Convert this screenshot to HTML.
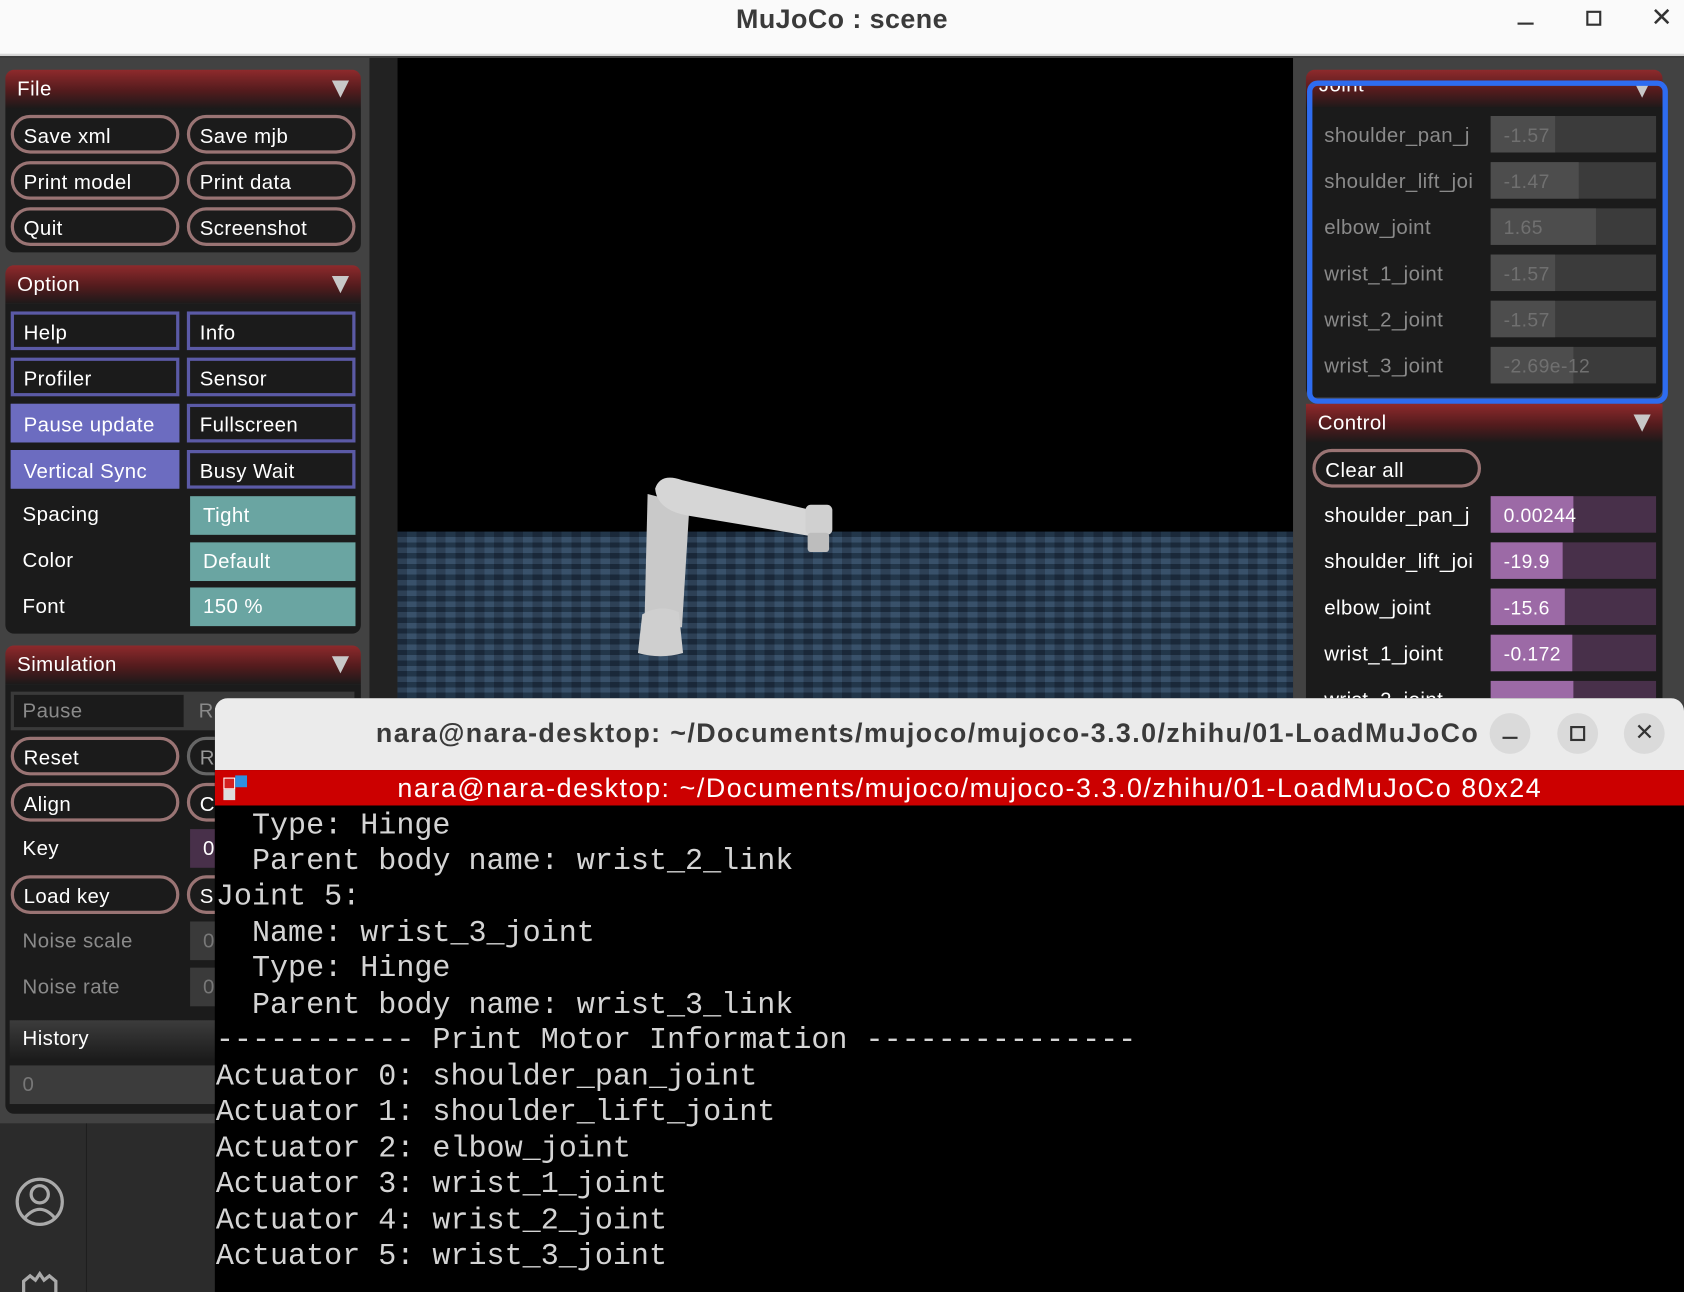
<!DOCTYPE html>
<html><head><meta charset="utf-8">
<style>
html,body{margin:0;padding:0;width:1684px;height:1292px;overflow:hidden;background:#3c3c3c}
#w{position:absolute;left:0;top:0;width:1568px;height:1203px;transform:scale(1.07398);transform-origin:0 0;font-family:"Liberation Sans",sans-serif;}
.a{position:absolute;box-sizing:border-box}
.t{position:absolute;white-space:nowrap;font-size:19px;color:#fff;line-height:1;letter-spacing:0.4px}
.hdr{position:absolute;height:36px;border-radius:8px 8px 0 0;background:linear-gradient(#8e2a2c,#521b1d 55%,#1c1a1a);}
.hdr span{position:absolute;left:11px;top:8px;font-size:19px;color:#fff;letter-spacing:0.4px}
.tri{position:absolute;right:11px;top:10px;width:0;height:0;border-left:8px solid transparent;border-right:8px solid transparent;border-top:16px solid #c8c8c8}
.body{position:absolute;background:#1b1b1b;border-radius:0 0 8px 8px}
.pill{position:absolute;height:36px;border:3px solid #9a7474;border-radius:18px;box-sizing:border-box;color:#fff;font-size:19px;padding:7px 0 0 9px;white-space:nowrap;overflow:hidden;letter-spacing:0.4px}
.rb{position:absolute;height:36px;border:3px solid #5b5aa6;box-sizing:border-box;color:#fff;font-size:19px;padding:7px 0 0 9px;white-space:nowrap;letter-spacing:0.4px}
.rf{background:#6c6cc0;border-color:#6c6cc0}
.teal{position:absolute;height:36px;background:#6aa5a2;color:#fff;font-size:19px;padding:8px 0 0 12px;box-sizing:border-box;letter-spacing:0.4px}
.sl{position:absolute;height:34px;left:1388px;width:154px;background:#3b3b3b}
.sl i{position:absolute;left:0;top:0;bottom:0;background:#4d4d4d}
.sl b{position:absolute;left:12px;top:8px;font-weight:normal;font-size:18px;color:#707070;letter-spacing:0.4px}
.cs{background:#48304a}.cs i{background:#9c6aa6}.cs b{color:#fff}
.term{font-family:"Liberation Mono","DejaVu Sans Mono",monospace;font-size:28px;color:#d4d4d4;white-space:pre;position:absolute;left:201px;line-height:1}
</style></head><body><div id="w">
<div class="a" style="left:0;top:0;width:1568px;height:52px;background:#fafafa;border-bottom:2px solid #d8d8d8"></div>
<div class="t" style="left:0;width:1568px;text-align:center;top:6px;font-size:25px;font-weight:bold;color:#3a3a3a">MuJoCo : scene</div>
<div class="a" style="left:1413px;top:21px;width:15px;height:2px;background:#333"></div>
<div class="a" style="left:1477px;top:10px;width:14px;height:14px;border:2px solid #333"></div>
<div class="t" style="left:1537px;top:5px;font-size:24px;color:#333">✕</div>

<div class="a" style="left:370px;top:54px;width:834px;height:600px;background:#000"></div>
<div class="a" style="left:370px;top:495px;width:834px;height:160px;background:repeating-linear-gradient(90deg,#22364c 0 9px,#2e4862 9px 18px);"></div>
<div class="a" style="left:370px;top:495px;width:834px;height:160px;background:repeating-linear-gradient(180deg,rgba(0,0,0,.25) 0 5px,rgba(255,255,255,.05) 5px 10px);"></div>
<svg class="a" style="left:0;top:0" width="1568" height="1203">
<polygon points="603,460 642,470 635,584 600,584" fill="#c9c9c9"/>
<path d="M610,455 Q615,440 635,447 L760,476 L760,500 L640,480 Q612,475 610,455Z" fill="#d6d6d6"/>
<rect x="750" y="470" width="25" height="28" rx="5" fill="#d0d0d0"/>
<rect x="752" y="496" width="20" height="18" rx="3" fill="#bdbdbd"/>
<path d="M598,572 Q615,562 632,570 L636,608 Q615,614 594,608Z" fill="#cfcfcf"/>
</svg>

<div class="a" style="left:0;top:54px;width:344px;height:992px;background:#424242"></div>
<div class="a" style="left:344px;top:54px;width:26px;height:992px;background:#222"></div>
<div class="hdr" style="left:5px;top:65px;width:331px"><span>File</span><div class="tri"></div></div>
<div class="body" style="left:5px;top:101px;width:331px;height:134px"></div>
<div class="pill" style="left:10px;top:107px;width:157px">Save xml</div>
<div class="pill" style="left:174px;top:107px;width:157px">Save mjb</div>
<div class="pill" style="left:10px;top:150px;width:157px">Print model</div>
<div class="pill" style="left:174px;top:150px;width:157px">Print data</div>
<div class="pill" style="left:10px;top:193px;width:157px">Quit</div>
<div class="pill" style="left:174px;top:193px;width:157px">Screenshot</div>

<div class="hdr" style="left:5px;top:247px;width:331px"><span>Option</span><div class="tri"></div></div>
<div class="body" style="left:5px;top:283px;width:331px;height:307px"></div>
<div class="rb" style="left:10px;top:290px;width:157px">Help</div>
<div class="rb" style="left:174px;top:290px;width:157px">Info</div>
<div class="rb" style="left:10px;top:333px;width:157px">Profiler</div>
<div class="rb" style="left:174px;top:333px;width:157px">Sensor</div>
<div class="rb rf" style="left:10px;top:376px;width:157px">Pause update</div>
<div class="rb" style="left:174px;top:376px;width:157px">Fullscreen</div>
<div class="rb rf" style="left:10px;top:419px;width:157px">Vertical Sync</div>
<div class="rb" style="left:174px;top:419px;width:157px">Busy Wait</div>
<div class="t" style="left:21px;top:470px">Spacing</div><div class="teal" style="left:177px;top:462px;width:154px">Tight</div>
<div class="t" style="left:21px;top:513px">Color</div><div class="teal" style="left:177px;top:505px;width:154px">Default</div>
<div class="t" style="left:21px;top:556px">Font</div><div class="teal" style="left:177px;top:547px;width:154px">150 %</div>

<div class="hdr" style="left:5px;top:601px;width:331px"><span>Simulation</span><div class="tri"></div></div>
<div class="body" style="left:5px;top:637px;width:331px;height:400px"></div>
<div class="a" style="left:10px;top:644px;width:320px;height:36px;background:#3a3a3a"></div>
<div class="a" style="left:13px;top:647px;width:158px;height:30px;background:#1b1b1b"></div>
<div class="t" style="left:21px;top:653px;color:#8a8a8a">Pause</div><div class="t" style="left:185px;top:653px;color:#8a8a8a">R</div>
<div class="pill" style="left:10px;top:686px;width:157px">Reset</div>
<div class="pill" style="left:174px;top:686px;width:157px;border-color:#666;color:#999">R</div>
<div class="pill" style="left:10px;top:729px;width:157px">Align</div>
<div class="pill" style="left:174px;top:729px;width:157px">C</div>
<div class="t" style="left:21px;top:781px">Key</div><div class="a" style="left:177px;top:772px;width:154px;height:36px;background:#48304a"></div><div class="t" style="left:189px;top:781px">0</div>
<div class="pill" style="left:10px;top:815px;width:157px">Load key</div>
<div class="pill" style="left:174px;top:815px;width:157px">S</div>
<div class="t" style="left:21px;top:867px;color:#8a8a8a">Noise scale</div><div class="a" style="left:177px;top:858px;width:154px;height:36px;background:#3a3a3a"></div><div class="t" style="left:189px;top:867px;color:#777">0</div>
<div class="t" style="left:21px;top:910px;color:#8a8a8a">Noise rate</div><div class="a" style="left:177px;top:901px;width:154px;height:36px;background:#3a3a3a"></div><div class="t" style="left:189px;top:910px;color:#777">0</div>
<div class="a" style="left:9px;top:950px;width:327px;height:36px;background:linear-gradient(#3c3c3c,#1c1c1c)"></div>
<div class="t" style="left:21px;top:958px">History</div>
<div class="a" style="left:9px;top:992px;width:327px;height:36px;background:#3c3c3c"></div>
<div class="t" style="left:21px;top:1001px;color:#777">0</div>

<div class="a" style="left:0;top:1046px;width:200px;height:157px;background:#2b2b2b"></div>
<div class="a" style="left:80px;top:1046px;width:1px;height:157px;background:#1e1e1e"></div>
<svg class="a" style="left:0;top:1046px" width="80" height="157">
<circle cx="37" cy="73" r="21" fill="none" stroke="#aaa" stroke-width="3"/>
<circle cx="37" cy="66" r="8" fill="none" stroke="#aaa" stroke-width="3"/>
<path d="M23,88 Q37,72 51,88" fill="none" stroke="#aaa" stroke-width="3"/>
<path d="M22,157 L22,147 L28,142 L33,146 L37,140 L41,146 L46,142 L52,147 L52,157" fill="none" stroke="#aaa" stroke-width="3"/>
</svg>

<div class="a" style="left:1204px;top:54px;width:364px;height:600px;background:#424242"></div>
<div class="hdr" style="left:1216px;top:65px;width:332px"><div class="tri"></div></div>
<div class="body" style="left:1216px;top:100px;width:332px;height:270px"></div>
<div class="t" style="left:1228px;top:74px;color:#fff;height:10px;overflow:hidden;top:80px;line-height:0">Joint</div>
<div class="t" style="left:1233px;top:117px;color:#8a8a8a">shoulder_pan_j</div><div class="sl" style="top:108px"><i style="width:60px"></i><b>-1.57</b></div>
<div class="t" style="left:1233px;top:160px;color:#8a8a8a">shoulder_lift_joi</div><div class="sl" style="top:151px"><i style="width:82px"></i><b>-1.47</b></div>
<div class="t" style="left:1233px;top:203px;color:#8a8a8a">elbow_joint</div><div class="sl" style="top:194px"><i style="width:98px"></i><b>1.65</b></div>
<div class="t" style="left:1233px;top:246px;color:#8a8a8a">wrist_1_joint</div><div class="sl" style="top:237px"><i style="width:60px"></i><b>-1.57</b></div>
<div class="t" style="left:1233px;top:289px;color:#8a8a8a">wrist_2_joint</div><div class="sl" style="top:280px"><i style="width:60px"></i><b>-1.57</b></div>
<div class="t" style="left:1233px;top:332px;color:#8a8a8a">wrist_3_joint</div><div class="sl" style="top:323px"><i style="width:77px"></i><b>-2.69e-12</b></div>
<div class="a" style="left:1217px;top:75px;width:336px;height:301px;border:5px solid #2e6cf0;border-radius:10px"></div>
<div class="hdr" style="left:1216px;top:376px;width:332px;border-radius:0"><span>Control</span><div class="tri"></div></div>
<div class="body" style="left:1216px;top:412px;width:332px;height:242px;border-radius:0"></div>
<div class="pill" style="left:1222px;top:418px;width:157px">Clear all</div>
<div class="t" style="left:1233px;top:471px">shoulder_pan_j</div><div class="sl cs" style="top:462px"><i style="width:77px"></i><b>0.00244</b></div>
<div class="t" style="left:1233px;top:514px">shoulder_lift_joi</div><div class="sl cs" style="top:505px"><i style="width:67px"></i><b>-19.9</b></div>
<div class="t" style="left:1233px;top:557px">elbow_joint</div><div class="sl cs" style="top:548px"><i style="width:69px"></i><b>-15.6</b></div>
<div class="t" style="left:1233px;top:600px">wrist_1_joint</div><div class="sl cs" style="top:591px"><i style="width:76px"></i><b>-0.172</b></div>
<div class="sl cs" style="top:634px"><i style="width:77px"></i></div>
<div class="t" style="left:1233px;top:643px">wrist_2_joint</div>

<div class="a" style="left:200px;top:650px;width:1368px;height:553px;background:#000;border-radius:12px 12px 0 0;overflow:hidden">
 <div class="a" style="left:0;top:0;width:1368px;height:67px;background:#ebebeb"></div>
 <div class="a" style="left:0;top:67px;width:1368px;height:33px;background:#cc0000"></div>
</div>
<div class="t" style="left:350px;top:671px;font-size:25px;font-weight:bold;color:#3a3a3a;letter-spacing:1.3px">nara@nara-desktop: ~/Documents/mujoco/mujoco-3.3.0/zhihu/01-LoadMuJoCo</div>
<div class="a" style="left:1387px;top:664px;width:38px;height:38px;border-radius:50%;background:#dadada"></div>
<div class="a" style="left:1450px;top:664px;width:38px;height:38px;border-radius:50%;background:#dadada"></div>
<div class="a" style="left:1512px;top:664px;width:38px;height:38px;border-radius:50%;background:#dadada"></div>
<div class="a" style="left:1399px;top:686px;width:14px;height:2px;background:#333"></div>
<div class="a" style="left:1462px;top:676px;width:14px;height:14px;border:2px solid #333"></div>
<div class="t" style="left:1522px;top:671px;font-size:22px;color:#333">✕</div>
<div class="a" style="left:208px;top:724px;width:11px;height:11px;background:#d42020;border:1px solid #fff"></div>
<div class="a" style="left:219px;top:722px;width:11px;height:11px;background:#2f8fe0"></div>
<div class="a" style="left:208px;top:735px;width:11px;height:10px;background:#ddd"></div>
<div class="t" style="left:370px;top:722px;font-size:25px;color:#fff;letter-spacing:1.45px">nara@nara-desktop: ~/Documents/mujoco/mujoco-3.3.0/zhihu/01-LoadMuJoCo 80x24</div>
<div class="term" style="top:756px">  Type: Hinge</div>
<div class="term" style="top:789px">  Parent body name: wrist_2_link</div>
<div class="term" style="top:822px">Joint 5:</div>
<div class="term" style="top:856px">  Name: wrist_3_joint</div>
<div class="term" style="top:889px">  Type: Hinge</div>
<div class="term" style="top:923px">  Parent body name: wrist_3_link</div>
<div class="term" style="top:956px">----------- Print Motor Information ---------------</div>
<div class="term" style="top:990px">Actuator 0: shoulder_pan_joint</div>
<div class="term" style="top:1023px">Actuator 1: shoulder_lift_joint</div>
<div class="term" style="top:1057px">Actuator 2: elbow_joint</div>
<div class="term" style="top:1090px">Actuator 3: wrist_1_joint</div>
<div class="term" style="top:1124px">Actuator 4: wrist_2_joint</div>
<div class="term" style="top:1157px">Actuator 5: wrist_3_joint</div>
</div></body></html>
